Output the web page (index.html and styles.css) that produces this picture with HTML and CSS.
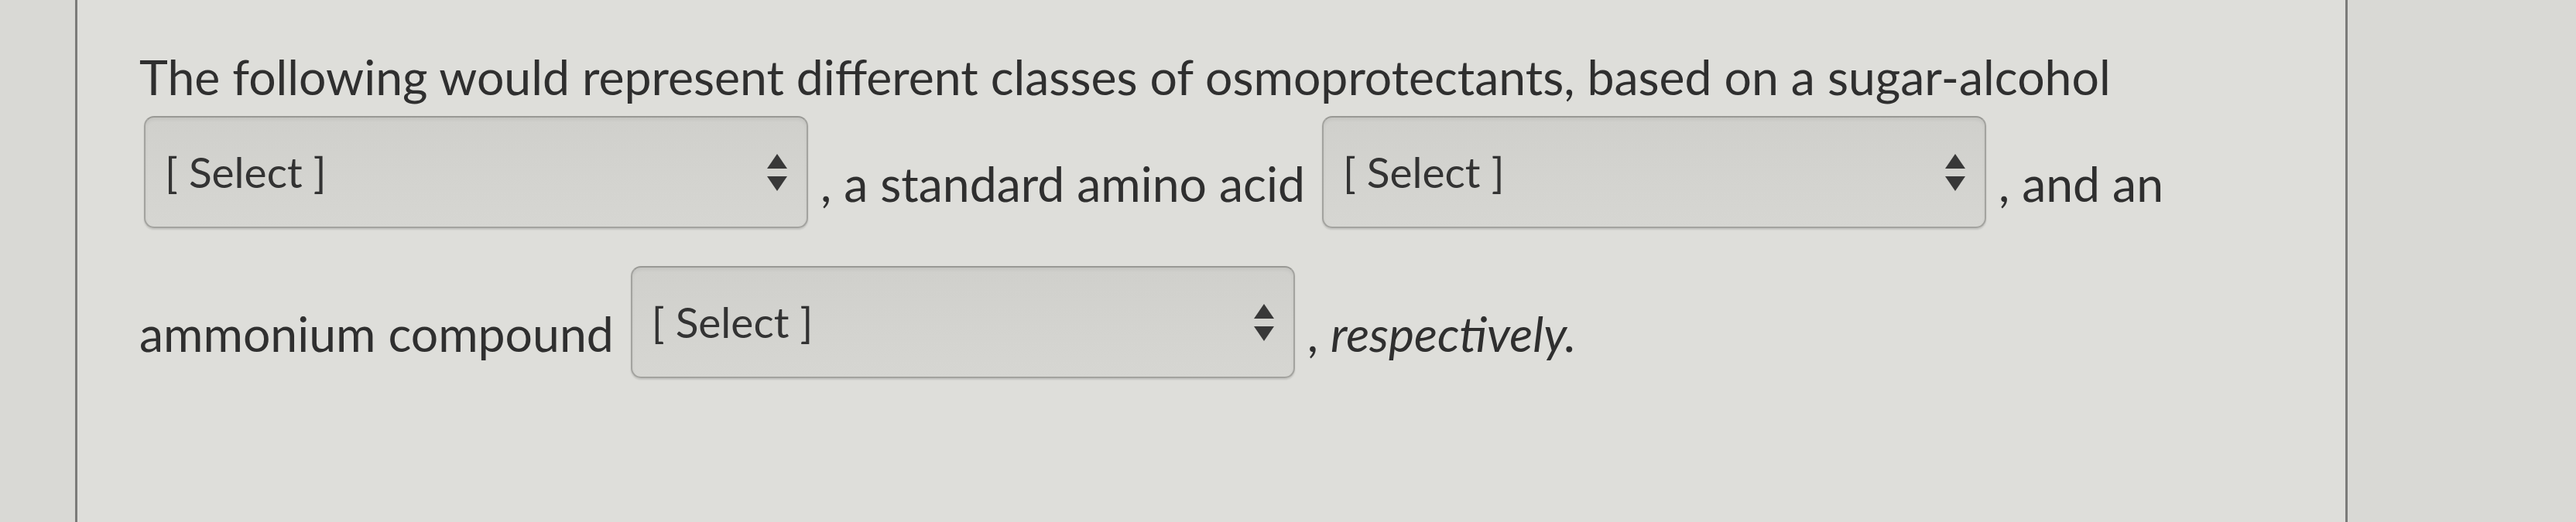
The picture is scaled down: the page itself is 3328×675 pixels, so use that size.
FILE: index.html
```html
<!DOCTYPE html>
<html lang="en">
<head>
<meta charset="utf-8">
<title>Osmoprotectants question</title>
<link rel="stylesheet" href="styles.css">
</head>
<body>
  <div class="frame">
    <div class="content">
      <p class="question"><span class="frag">The following would represent different classes of osmoprotectants, based on a sugar-alcohol</span> <span class="select"><span class="select-label">[ Select ]</span><svg class="arrows" viewBox="0 0 26 48" width="26" height="48" aria-hidden="true"><path d="M13 0 L26 19 L0 19 Z"/><path d="M0 29 L26 29 L13 48 Z"/></svg></span><span class="frag">, a standard amino acid</span> <span class="select"><span class="select-label">[ Select ]</span><svg class="arrows" viewBox="0 0 26 48" width="26" height="48" aria-hidden="true"><path d="M13 0 L26 19 L0 19 Z"/><path d="M0 29 L26 29 L13 48 Z"/></svg></span><span class="frag">, and an</span> <span class="frag">ammonium compound</span> <span class="select"><span class="select-label">[ Select ]</span><svg class="arrows" viewBox="0 0 26 48" width="26" height="48" aria-hidden="true"><path d="M13 0 L26 19 L0 19 Z"/><path d="M0 29 L26 29 L13 48 Z"/></svg></span><span class="frag">, <em>respectively.</em></span></p>
    </div>
  </div>
</body>
</html>
```

FILE: styles.css
```css
html, body {
  margin: 0;
  padding: 0;
}

body {
  width: 3328px;
  height: 675px;
  overflow: hidden;
  background: #d9d9d5;
  font-family: "Lato", "Liberation Sans", sans-serif;
  color: #2f2f2f;
}

.frame {
  margin-left: 97px;
  width: 2930px;
  height: 675px;
  border-left: 3px solid #7b7b79;
  border-right: 3px solid #7b7b79;
  background: #dededa;
}

.content {
  padding: 55px 60px 0 80px;
}

.question {
  margin: 0;
  font-size: 62.5px;
  line-height: 87px;
}

.question em {
  font-style: italic;
}

.select {
  display: inline-flex;
  align-items: center;
  justify-content: space-between;
  box-sizing: border-box;
  width: 858px;
  height: 145px;
  margin: 8px 16px 41px 6px;
  padding: 0 25px 0 25px;
  vertical-align: 18px;
  background: linear-gradient(#d0d0cc, #d6d6d2);
  border: 2px solid #a3a39f;
  border-top-color: #999995;
  border-radius: 13px;
  box-shadow: inset 0 3px 4px rgba(0, 0, 0, 0.06), 0 2px 2px rgba(0, 0, 0, 0.12);
}

.select-label {
  font-size: 55px;
  line-height: 1;
  color: #333333;
}

.arrows {
  fill: #383838;
  flex: none;
}
```
